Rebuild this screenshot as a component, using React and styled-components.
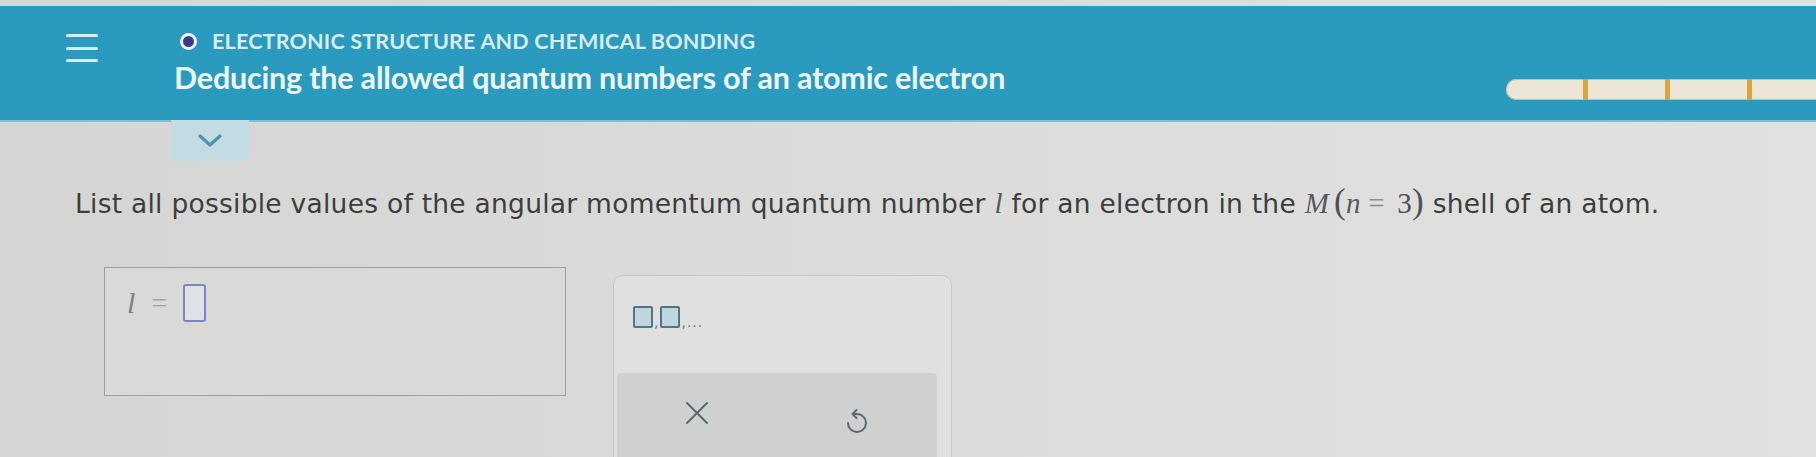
import styled, { createGlobalStyle } from 'styled-components';

const GlobalStyle = createGlobalStyle`
  body {
    margin: 0;
    background: #dadbd9;
    overflow: hidden;
  }
`;

const segments = [0, 1, 2, 3, 4];

export default function App() {
  return (
    <Page>
      <GlobalStyle />
      <Header>
        <MenuButton type="button" aria-label="menu">
          <MenuLine />
          <MenuLine />
          <MenuLine />
        </MenuButton>
        <HeaderText>
          <Breadcrumb>
            <StatusDot />
            ELECTRONIC STRUCTURE AND CHEMICAL BONDING
          </Breadcrumb>
          <Title>Deducing the allowed quantum numbers of an atomic electron</Title>
        </HeaderText>
        <ProgressBar>
          {segments.map((s) => (
            <Segment key={s} />
          ))}
        </ProgressBar>
      </Header>

      <CollapseTab type="button" aria-label="collapse">
        <svg width="28" height="18" viewBox="0 0 28 18">
          <path d="M4 4 L14 13 L24 4" fill="none" stroke="#4f93b1" strokeWidth="3.2" strokeLinecap="round" strokeLinejoin="round" />
        </svg>
      </CollapseTab>

      <Question>
        List all possible values of the angular momentum quantum number <MathVar>l</MathVar> for an electron in
        the <MathVar>M</MathVar>
        <MathExpr>
          <Paren>(</Paren>
          <MathVar>n</MathVar> <Eq>=</Eq> 3<Paren>)</Paren>
        </MathExpr>{' '}
        shell of an atom.
      </Question>

      <AnswerRow>
        <AnswerBox>
          <AnswerLine>
            <AnswerVar>l</AnswerVar>
            <AnswerEq>=</AnswerEq>
            <Slot />
          </AnswerLine>
        </AnswerBox>

        <ToolPanel>
          <TemplateButton type="button" aria-label="list template">
            <MiniSlot />
            <Comma>,</Comma>
            <MiniSlot />
            <Comma>,...</Comma>
          </TemplateButton>
          <ActionBar>
            <ActionButton type="button" aria-label="clear">
              <svg width="28" height="28" viewBox="0 0 28 28">
                <path d="M4 4 L24 24 M24 4 L4 24" stroke="#5d676d" strokeWidth="2" strokeLinecap="round" />
              </svg>
            </ActionButton>
            <ActionButton type="button" aria-label="undo" $offset={8}>
              <svg width="28" height="30" viewBox="0 0 28 30">
                <path d="M10 7 H14 A9 9 0 1 1 5 16" fill="none" stroke="#5d676d" strokeWidth="2" strokeLinecap="round" />
                <path d="M13.5 3 L9.5 7 L13.5 11" fill="none" stroke="#5d676d" strokeWidth="2" strokeLinecap="round" strokeLinejoin="round" />
              </svg>
            </ActionButton>
          </ActionBar>
        </ToolPanel>
      </AnswerRow>
    </Page>
  );
}

const Page = styled.div`
  width: 1816px;
  height: 457px;
  overflow: hidden;
  background: linear-gradient(90deg, #d5d6d4 0%, #dcdddb 55%, #e1e2e0 100%);
`;

const Header = styled.header`
  margin-top: 6px;
  height: 114px;
  background: #2a9bbf;
  display: flex;
  align-items: flex-start;
  padding-left: 66px;
  overflow: hidden;
  box-shadow: 0 2px 0 #7dbfd3;
`;

const MenuButton = styled.button`
  margin-top: 28px;
  width: 32px;
  height: 28px;
  padding: 0;
  border: none;
  background: transparent;
  display: flex;
  flex-direction: column;
  justify-content: space-between;
`;

const MenuLine = styled.span`
  display: block;
  width: 32px;
  height: 3px;
  border-radius: 2px;
  background: #dcebf0;
`;

const HeaderText = styled.div`
  margin-left: 76px;
  margin-top: 22px;
  display: flex;
  flex-direction: column;
  gap: 5px;
`;

const Breadcrumb = styled.div`
  display: flex;
  align-items: center;
  gap: 15px;
  padding-left: 6px;
  font-family: Lato, 'Open Sans', sans-serif;
  font-weight: 700;
  font-size: 21.5px;
  letter-spacing: 0.2px;
  color: #d9ecf1;
`;

const StatusDot = styled.span`
  width: 11px;
  height: 11px;
  border-radius: 50%;
  background: #3b3a8c;
  border: 3px solid #eef4f6;
`;

const Title = styled.h1`
  margin: 0;
  font-family: Lato, 'Open Sans', sans-serif;
  font-weight: 700;
  font-size: 30.5px;
  letter-spacing: -0.2px;
  color: #eef5f6;
`;

const ProgressBar = styled.div`
  margin-left: auto;
  margin-right: -110px;
  margin-top: 73px;
  flex-shrink: 0;
  width: 420px;
  height: 21px;
  border-radius: 11px;
  background: #ebe6d6;
  box-shadow: inset 0 0 0 1px #c9bf9f;
  display: flex;
  overflow: hidden;
`;

const Segment = styled.span`
  width: 77px;
  flex-shrink: 0;
  border-right: 5px solid #d6a640;
`;

const CollapseTab = styled.button`
  display: flex;
  align-items: center;
  justify-content: center;
  margin-left: 171px;
  width: 78px;
  height: 41px;
  padding: 0;
  border: none;
  border-radius: 0 0 6px 6px;
  background: #c3dbe2;
`;

const Question = styled.p`
  margin: 24px 0 0;
  padding-left: 75px;
  font-family: 'DejaVu Sans', Verdana, sans-serif;
  font-size: 26.5px;
  line-height: 34px;
  letter-spacing: 0.25px;
  color: #3b3d3f;
  white-space: nowrap;
`;

const MathVar = styled.i`
  font-family: 'Liberation Serif', 'Times New Roman', serif;
  font-size: 29px;
  color: #555a60;
`;

const MathExpr = styled.span`
  margin-left: 5px;
  font-family: 'Liberation Serif', 'Times New Roman', serif;
  font-size: 29px;
  color: #4c5157;
`;

const Paren = styled.span`
  font-size: 35px;
`;

const Eq = styled.span`
  color: #8a8f94;
  margin-right: 5px;
`;

const AnswerRow = styled.div`
  display: flex;
  align-items: flex-start;
  gap: 47px;
  margin-top: 46px;
  padding-left: 104px;
`;

const AnswerBox = styled.div`
  width: 462px;
  height: 129px;
  border: 1.5px solid #9c9d9c;
  background: #d9dad7;
  box-sizing: border-box;
  padding: 16px 0 0 22px;
`;

const AnswerLine = styled.div`
  display: flex;
  align-items: center;
  gap: 16px;
`;

const AnswerVar = styled.i`
  font-family: 'Liberation Serif', 'Times New Roman', serif;
  font-size: 30px;
  color: #7d8185;
`;

const AnswerEq = styled.span`
  font-family: 'Liberation Serif', 'Times New Roman', serif;
  font-size: 28px;
  color: #a0a4a7;
`;

const Slot = styled.span`
  width: 19px;
  height: 34px;
  border: 2px solid #7b86bd;
  border-radius: 3px;
  background: #dfe1e6;
`;

const ToolPanel = styled.div`
  margin-top: 8px;
  width: 339px;
  height: 220px;
  box-sizing: border-box;
  border: 1.5px solid #c6c8c8;
  border-radius: 10px;
  background: #e0e1df;
  padding: 30px 14px 0 3px;
`;

const TemplateButton = styled.button`
  margin-left: 16px;
  display: flex;
  align-items: flex-end;
  padding: 0;
  border: none;
  background: transparent;
`;

const MiniSlot = styled.span`
  width: 16px;
  height: 18px;
  border: 2px solid #4d7787;
  border-radius: 2px;
  background: #bfd6dc;
`;

const Comma = styled.span`
  font-family: 'DejaVu Sans', sans-serif;
  font-size: 14px;
  line-height: 12px;
  color: #5a7d8a;
  letter-spacing: 1px;
  padding: 0 1px;
`;

const ActionBar = styled.div`
  margin-top: 45px;
  height: 110px;
  border-radius: 4px;
  background: #cfd1d1;
  display: grid;
  grid-template-columns: 1fr 1fr;
`;

const ActionButton = styled.button`
  display: flex;
  justify-content: center;
  align-items: flex-start;
  padding: ${(p) => 26 + (p.$offset || 0)}px 0 0;
  border: none;
  background: transparent;
`;
